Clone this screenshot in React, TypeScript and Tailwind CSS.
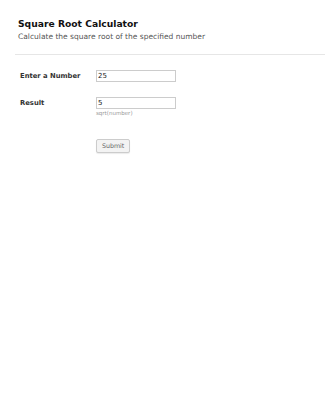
import React from "react";

export default function App() {
  return (
    <div className="w-[325px] h-[400px] bg-white" style={{ fontFamily: '"DejaVu Sans", Verdana, sans-serif' }}>
      <div className="pt-[17px] px-[18px]">
        <h1 className="text-[9.2px] font-bold text-[#111] leading-[13px]">Square Root Calculator</h1>
        <p className="text-[7.5px] text-[#555] leading-[11px] mt-[1px]">Calculate the square root of the specified number</p>
      </div>
      <div className="ml-[15px] mt-[12px] border-t border-[#e6e6e6]" />
      <div className="pl-[20px] pt-[15px]">
        <div className="flex items-center h-[12px]">
          <label className="w-[76px] text-[6.8px] font-bold text-[#333] leading-[12px]">Enter a Number</label>
          <input
            readOnly
            value="25"
            className="w-[80px] h-[12px] border border-[#ccc] px-[1px] text-[7px] text-[#222] outline-none"
          />
        </div>
        <div className="flex items-start mt-[15px]">
          <label className="w-[76px] text-[6.8px] font-bold text-[#333] leading-[12px]">Result</label>
          <div className="flex flex-col">
            <input
              readOnly
              value="5"
              className="w-[80px] h-[12px] border border-[#ccc] px-[1px] text-[7px] text-[#222] outline-none"
            />
            <span className="text-[5.5px] text-[#999] leading-[7px] mt-[1px]">sqrt(number)</span>
          </div>
        </div>
        <div className="pl-[76px] mt-[22px] flex">
          <button className="h-[14px] px-[5px] text-[6.3px] leading-[12px] text-[#666] bg-[#f3f3f3] border border-[#ccc] rounded-[2px] shadow-[0_1px_1px_rgba(0,0,0,0.08)]">
            Submit
          </button>
        </div>
      </div>
    </div>
  );
}
